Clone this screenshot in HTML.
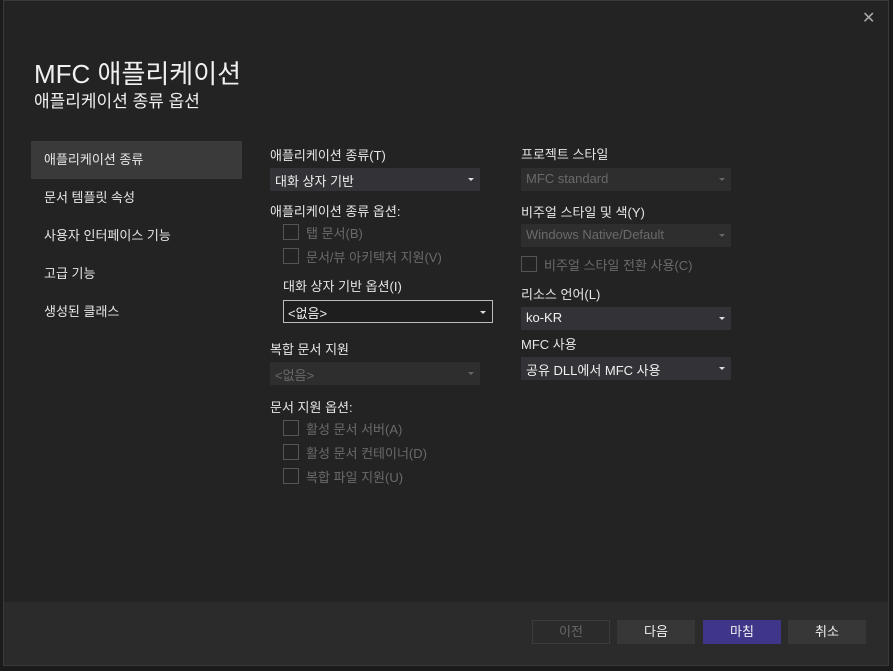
<!DOCTYPE html>
<html><head><meta charset="utf-8"><style>
*{margin:0;padding:0;box-sizing:border-box}
body{width:893px;height:671px;background:#1b1b1b;position:relative;overflow:hidden;font-family:"Liberation Sans","Noto Sans CJK KR",sans-serif;color:#e6e6e6}
.dlg{position:absolute;left:3px;top:0;width:886px;height:666px;background:#232323;border:1px solid #3a3a3a}
.foot{position:absolute;left:3px;top:602px;width:886px;height:64px;background:#2b2b2b;border:1px solid #3a3a3a;border-top:none}
.a{position:absolute;white-space:nowrap}
.t{font-size:13px}
.dd{position:absolute;width:210px;height:23px;background:#333337;font-size:13px;padding:3px 5px;color:#f0f0f0}
.dd::after{content:"";position:absolute;right:6px;top:10px;border-left:3px solid transparent;border-right:3px solid transparent;border-top:3px solid #ddd}
.dis{color:#6a6a6a;background:#2e2e2e}
.dis::after{border-top-color:#666}
.cb{position:absolute;width:16px;height:16px;border:1px solid #555}
.cl{position:absolute;font-size:13px;color:#6a6a6a;white-space:nowrap}
.btn{position:absolute;top:620px;width:78px;height:24px;background:#373737;font-size:13px;text-align:center;line-height:24px;color:#f0f0f0}
</style></head><body>
<div class="dlg"></div>
<div class="foot"></div>
<div class="a" style="left:862px;top:8px;font-size:16px;color:#aaa">✕</div>
<div class="a" style="left:34px;top:54px;font-size:26px;color:#f0f0f0">MFC 애플리케이션</div>
<div class="a" style="left:34px;top:87px;font-size:17px;color:#f0f0f0">애플리케이션 종류 옵션</div>
<div class="a" style="left:31px;top:141px;width:211px;height:38px;background:#3a3a3a"></div>
<div class="a t" style="left:44px;top:149px">애플리케이션 종류</div>
<div class="a t" style="left:44px;top:187px">문서 템플릿 속성</div>
<div class="a t" style="left:44px;top:225px">사용자 인터페이스 기능</div>
<div class="a t" style="left:44px;top:263px">고급 기능</div>
<div class="a t" style="left:44px;top:301px">생성된 클래스</div>

<div class="a t" style="left:270px;top:145px">애플리케이션 종류(T)</div>
<div class="dd" style="left:270px;top:168px">대화 상자 기반</div>
<div class="a t" style="left:270px;top:201px">애플리케이션 종류 옵션:</div>
<div class="cb" style="left:283px;top:224px"></div><div class="cl" style="left:306px;top:223px">탭 문서(B)</div>
<div class="cb" style="left:283px;top:248px"></div><div class="cl" style="left:306px;top:247px">문서/뷰 아키텍처 지원(V)</div>
<div class="a t" style="left:283px;top:276px">대화 상자 기반 옵션(I)</div>
<div class="dd" style="left:283px;top:300px;background:#1e1e1e;border:1px solid #bbb;padding:2px 4px">&lt;없음&gt;</div>
<div class="a t" style="left:270px;top:339px">복합 문서 지원</div>
<div class="dd dis" style="left:270px;top:362px">&lt;없음&gt;</div>
<div class="a t" style="left:270px;top:397px">문서 지원 옵션:</div>
<div class="cb" style="left:283px;top:420px"></div><div class="cl" style="left:306px;top:419px">활성 문서 서버(A)</div>
<div class="cb" style="left:283px;top:444px"></div><div class="cl" style="left:306px;top:443px">활성 문서 컨테이너(D)</div>
<div class="cb" style="left:283px;top:468px"></div><div class="cl" style="left:306px;top:467px">복합 파일 지원(U)</div>

<div class="a t" style="left:521px;top:144px">프로젝트 스타일</div>
<div class="dd dis" style="left:521px;top:168px">MFC standard</div>
<div class="a t" style="left:521px;top:202px">비주얼 스타일 및 색(Y)</div>
<div class="dd dis" style="left:521px;top:224px">Windows Native/Default</div>
<div class="cb" style="left:521px;top:256px"></div><div class="cl" style="left:544px;top:255px">비주얼 스타일 전환 사용(C)</div>
<div class="a t" style="left:521px;top:284px">리소스 언어(L)</div>
<div class="dd" style="left:521px;top:307px">ko-KR</div>
<div class="a t" style="left:521px;top:334px">MFC 사용</div>
<div class="dd" style="left:521px;top:357px">공유 DLL에서 MFC 사용</div>

<div class="btn" style="left:532px;background:#2b2b2b;border:1px solid #3c3c3c;color:#666;line-height:22px">이전</div>
<div class="btn" style="left:617px">다음</div>
<div class="btn" style="left:703px;background:#3f3689">마침</div>
<div class="btn" style="left:788px">취소</div>
</body></html>
